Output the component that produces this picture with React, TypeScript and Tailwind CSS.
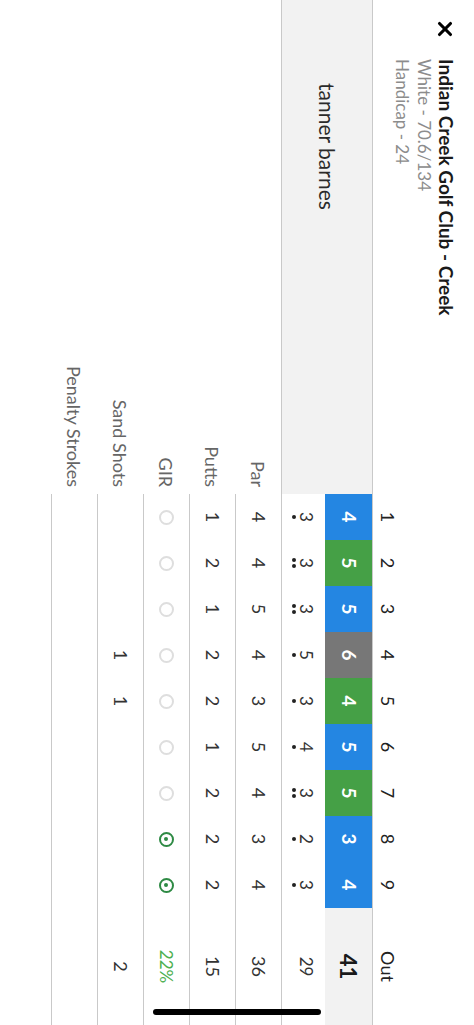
import { X } from "lucide-react"

const font = { fontFamily: 'Lato, "Noto Sans", sans-serif' }

const holes = [
  { hole: 1, score: 4, kind: "blue", net: 3, dots: 1, par: 4, putts: 1, gir: false, sand: "" },
  { hole: 2, score: 5, kind: "green", net: 3, dots: 2, par: 4, putts: 2, gir: false, sand: "" },
  { hole: 3, score: 5, kind: "blue", net: 3, dots: 2, par: 5, putts: 1, gir: false, sand: "" },
  { hole: 4, score: 6, kind: "gray", net: 5, dots: 1, par: 4, putts: 2, gir: false, sand: "1" },
  { hole: 5, score: 4, kind: "green", net: 3, dots: 1, par: 3, putts: 2, gir: false, sand: "1" },
  { hole: 6, score: 5, kind: "blue", net: 4, dots: 1, par: 5, putts: 1, gir: false, sand: "" },
  { hole: 7, score: 5, kind: "green", net: 3, dots: 2, par: 4, putts: 2, gir: false, sand: "" },
  { hole: 8, score: 3, kind: "blue", net: 2, dots: 1, par: 3, putts: 2, gir: true, sand: "" },
  { hole: 9, score: 4, kind: "blue", net: 3, dots: 1, par: 4, putts: 2, gir: true, sand: "" },
]

const cellBg: Record<string, string> = {
  blue: "bg-[#2486e2]",
  green: "bg-[#45a046]",
  gray: "bg-[#777777]",
}

function GirMark({ hit }: { hit: boolean }) {
  if (!hit) {
    return <span className="block h-[15px] w-[15px] rounded-full border-2 border-[#dedede]" />
  }
  return (
    <span className="flex h-[15px] w-[15px] items-center justify-center rounded-full border-2 border-[#2e8a44]">
      <span className="block h-[4px] w-[4px] rounded-full bg-[#2e8a44]" />
    </span>
  )
}

function StatRow({ label, children, total }: { label: string; children: React.ReactNode; total: React.ReactNode }) {
  return (
    <div className="flex h-[46px]">
      <div className="flex w-[494px] items-center justify-end pr-[7px] text-[18px] text-[#666]">{label}</div>
      <div className="flex flex-1 border-b border-[#c9c9c9]">
        {children}
        <div className="flex w-[117px] items-center justify-center">{total}</div>
      </div>
    </div>
  )
}

export default function App() {
  return (
    <div className="relative h-[1025px] w-[474px] overflow-hidden bg-white" style={font}>
      <div className="h-[474px] w-[1025px] origin-top-left translate-x-[474px] rotate-90 bg-white text-[#222]">
        {/* header */}
        <div className="flex h-[101px]">
          <div className="flex w-[494px] pl-[18px] pt-[16px]">
            <X className="mt-[2px] h-[22px] w-[22px] text-black" strokeWidth={3.4} />
            <div className="ml-[19px] flex flex-col">
              <span className="text-[19px] font-bold leading-[23px] text-[#1a1a1a]">Indian Creek Golf Club - Creek</span>
              <span className="text-[17px] leading-[22px] text-[#8c8c8c]">White - 70.6/134</span>
              <span className="text-[17px] leading-[22px] text-[#8c8c8c]">Handicap - 24</span>
            </div>
          </div>
          <div className="flex flex-1 items-end pb-[3px]">
            {holes.map((h) => (
              <div key={h.hole} className="flex h-[24px] w-[46px] items-center justify-center text-[18px] text-[#222]">
                {h.hole}
              </div>
            ))}
            <div className="flex h-[24px] w-[117px] items-center justify-center text-[18px] text-[#222]">Out</div>
          </div>
        </div>

        {/* player row */}
        <div className="flex h-[92px] border-y border-[#c9c9c9]">
          <div className="flex w-[494px] items-center bg-[#f2f2f2] pl-[83px] text-[21px] text-[#2a2a2a]">tanner barnes</div>
          {holes.map((h) => (
            <div key={h.hole} className="flex w-[46px] flex-col">
              <div className={`flex h-[47px] items-center justify-center text-[19px] font-bold text-white ${cellBg[h.kind]}`}>
                {h.score}
              </div>
              <div className="flex flex-1 flex-col items-center pt-[10px]">
                <span className="text-[17px] leading-[17px] text-[#333]">{h.net}</span>
                <span className="mt-[2px] flex gap-[2px]">
                  {Array.from({ length: h.dots }).map((_, i) => (
                    <span key={i} className="block h-[4px] w-[4px] rounded-full bg-[#222]" />
                  ))}
                </span>
              </div>
            </div>
          ))}
          <div className="flex w-[117px] flex-col">
            <div className="flex h-[47px] items-center justify-center bg-[#f2f2f2] text-[22px] font-bold text-[#1a1a1a]">41</div>
            <div className="flex flex-1 items-start justify-center pt-[10px] text-[17px] leading-[17px] text-[#333]">29</div>
          </div>
        </div>

        <StatRow label="Par" total={<span className="text-[18px] text-[#333]">36</span>}>
          {holes.map((h) => (
            <div key={h.hole} className="flex w-[46px] items-center justify-center text-[18px] text-[#333]">{h.par}</div>
          ))}
        </StatRow>
        <StatRow label="Putts" total={<span className="text-[18px] text-[#333]">15</span>}>
          {holes.map((h) => (
            <div key={h.hole} className="flex w-[46px] items-center justify-center text-[18px] text-[#333]">{h.putts}</div>
          ))}
        </StatRow>
        <StatRow label="GIR" total={<span className="text-[17px] text-[#4caf50]">22%</span>}>
          {holes.map((h) => (
            <div key={h.hole} className="flex w-[46px] items-center justify-center">
              <GirMark hit={h.gir} />
            </div>
          ))}
        </StatRow>
        <StatRow label="Sand Shots" total={<span className="text-[18px] text-[#333]">2</span>}>
          {holes.map((h) => (
            <div key={h.hole} className="flex w-[46px] items-center justify-center text-[18px] text-[#333]">{h.sand}</div>
          ))}
        </StatRow>
        <StatRow label="Penalty Strokes" total={null}>
          {holes.map((h) => (
            <div key={h.hole} className="w-[46px]" />
          ))}
        </StatRow>
      </div>

      {/* home indicator */}
      <div className="absolute bottom-[10px] left-[153px] h-[6px] w-[168px] rounded-full bg-black" />
    </div>
  )
}
